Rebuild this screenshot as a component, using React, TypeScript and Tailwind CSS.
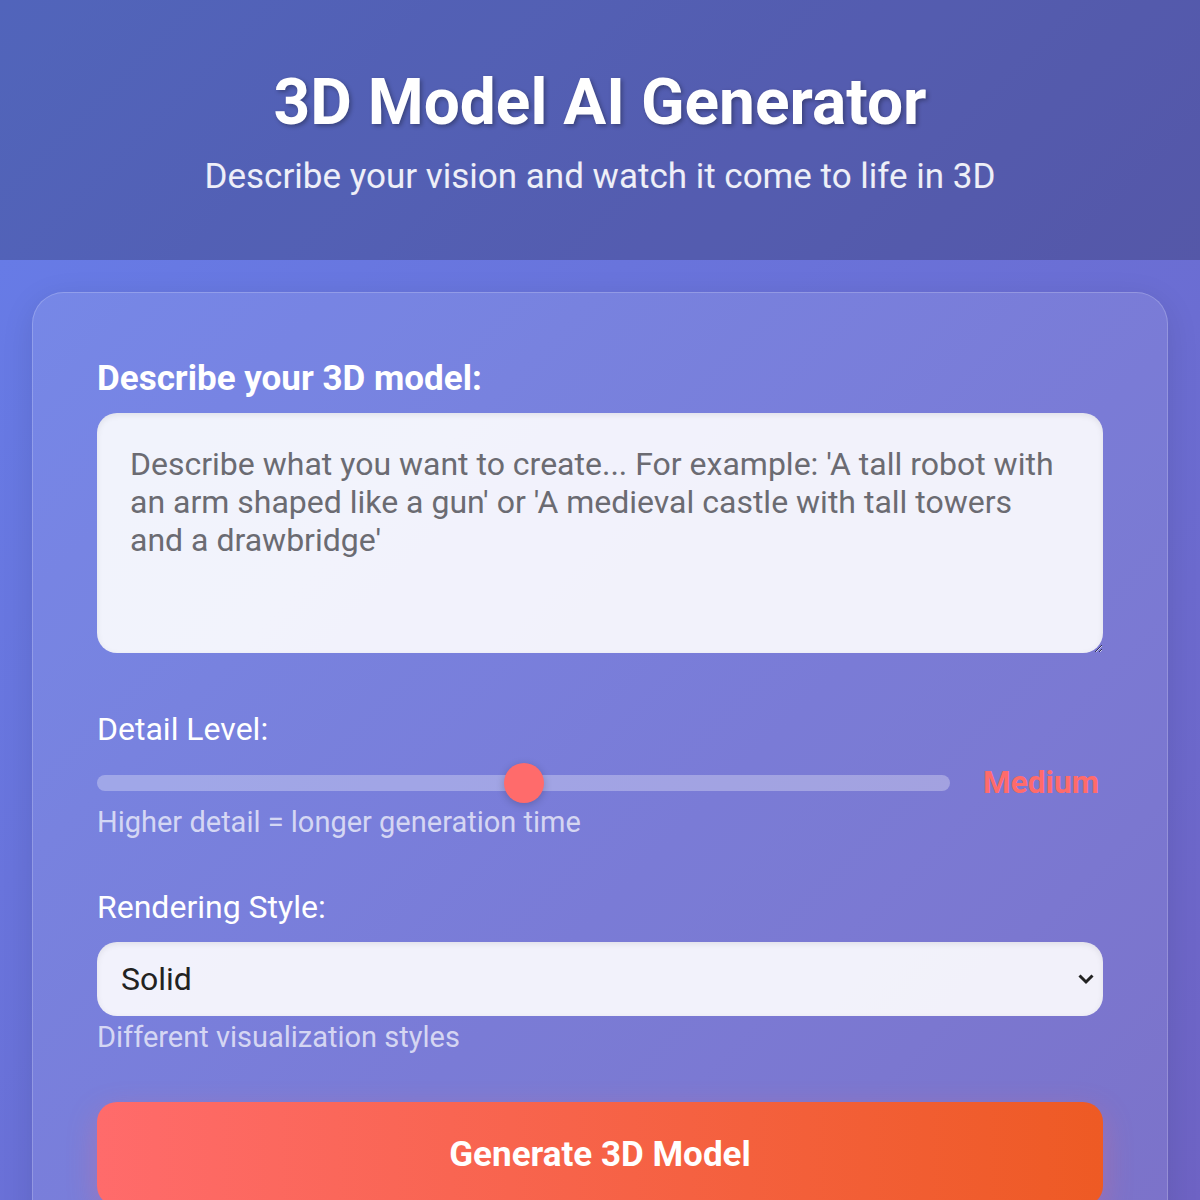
import React from "react";

export default function App() {
  return (
    <div
      className="h-[1200px] overflow-hidden bg-[linear-gradient(135deg,#667eea,#6e63c4)] text-white"
      style={{ fontFamily: "Roboto, 'Liberation Sans', sans-serif" }}
    >
      <header className="h-[260px] bg-black/20 flex flex-col items-center pt-[64px]">
        <h1 className="text-[64px] leading-[77px] font-bold [text-shadow:2px_2px_4px_rgba(0,0,0,0.3)]">
          3D Model AI Generator
        </h1>
        <p className="mt-[14px] text-[35px] leading-[43px] font-normal text-white/90">
          Describe your vision and watch it come to life in 3D
        </p>
      </header>

      <main className="p-8">
        <div className="rounded-[32px] border border-white/20 bg-white/10 shadow-[0_8px_32px_rgba(0,0,0,0.1)] px-16 pt-[65px] pb-16">
          <label className="block text-[35px] leading-[40px] font-bold pt-[1px] mb-[14px]">
            Describe your 3D model:
          </label>
          <textarea
            className="block w-full h-[240px] rounded-[20px] bg-white/90 px-[33px] py-[32px] text-[32px] leading-[38px] text-[#333] placeholder:text-[#6b6b72] outline-none shadow-[inset_0_2px_6px_rgba(0,0,0,0.08)]"
            placeholder="Describe what you want to create... For example: 'A tall robot with an arm shaped like a gun' or 'A medieval castle with tall towers and a drawbridge'"
          />

          <div className="mt-[56px]">
            <label className="block text-[32px] leading-[38px] pt-[1px] mb-[15px]">Detail Level:</label>
            <div className="flex items-center gap-[33px] h-[40px]">
              <div className="relative flex-1 h-4 rounded-full bg-white/30">
                <div className="absolute left-1/2 top-1/2 -translate-x-1/2 -translate-y-1/2 w-10 h-10 rounded-full bg-[#ff6b6b] shadow-[0_2px_8px_rgba(0,0,0,0.2)]" />
              </div>
              <span className="text-[31.6px] font-bold text-[#ff6b6b] leading-[40px] pr-[4px]">Medium</span>
            </div>
            <p className="pt-[1px] text-[29px] leading-[36px] text-white/70">
              Higher detail = longer generation time
            </p>
          </div>

          <div className="mt-[47px]">
            <label className="block text-[32px] leading-[38px] pt-[1px] mb-[16px]">Rendering Style:</label>
            <div className="relative">
              <div className="h-[74px] rounded-[20px] bg-white/90 flex items-center px-6 text-[32px] text-[#222] shadow-[inset_0_2px_6px_rgba(0,0,0,0.08)]">
                Solid
              </div>
              <svg
                className="absolute right-[8px] top-1/2 -translate-y-1/2"
                width="18"
                height="12"
                viewBox="0 0 18 12"
                fill="none"
              >
                <path d="M2.5 2.5L9 9L15.5 2.5" stroke="#222" strokeWidth="3" />
              </svg>
            </div>
            <p className="mt-[3px] text-[29px] leading-[36px] text-white/70">
              Different visualization styles
            </p>
          </div>

          <button className="mt-[47px] w-full h-[104px] rounded-[20px] bg-[linear-gradient(90deg,#ff6b6b,#ee5a24)] text-[35px] font-bold text-white pt-[2px] shadow-[0_10px_30px_rgba(255,107,107,0.3)]">
            Generate 3D Model
          </button>
        </div>
      </main>
    </div>
  );
}
